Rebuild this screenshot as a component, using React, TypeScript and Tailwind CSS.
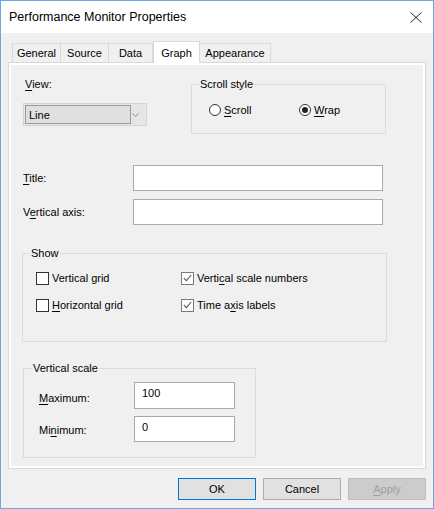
import React from 'react';

const font = "font-['Liberation_Sans',Arial,sans-serif]";

function U({ children }: { children: React.ReactNode }) {
  return <span className="underline decoration-1 underline-offset-[2px]">{children}</span>;
}

function Tab({ label, width, active }: { label: string; width: string; active?: boolean }) {
  if (active) {
    return (
      <div
        className={`${width} h-[22px] -mb-px relative z-10 bg-white border border-b-0 border-[#d9d9d9] flex items-center justify-center`}
      >
        {label}
      </div>
    );
  }
  return (
    <div
      className={`${width} h-[19px] mt-[2px] bg-[#f0f0f0] border border-b-0 border-[#d9d9d9] -ml-px first:ml-0 flex items-center justify-center`}
    >
      {label}
    </div>
  );
}

function Checkbox({ checked, children }: { checked?: boolean; children: React.ReactNode }) {
  return (
    <div className="flex items-center h-[14px]">
      <div
        className={`w-[13px] h-[13px] bg-white border flex items-center justify-center ${
          checked ? 'border-[#7a7a7a]' : 'border-[#333333]'
        }`}
      >
        {checked && (
          <svg width="9" height="8" viewBox="0 0 9 8">
            <path d="M0.8 4.2 L3.4 6.6 L8.2 1" fill="none" stroke="#555" strokeWidth="1.1" />
          </svg>
        )}
      </div>
      <span className="ml-[3px]">{children}</span>
    </div>
  );
}

function Radio({ checked, children }: { checked?: boolean; children: React.ReactNode }) {
  return (
    <div className="flex items-center h-[14px]">
      <div className="w-[12px] h-[12px] rounded-full bg-white border border-[#333333] flex items-center justify-center">
        {checked && <div className="w-[6px] h-[6px] rounded-full bg-[#222]" />}
      </div>
      <span className="ml-[3px]">{children}</span>
    </div>
  );
}

function Button({ children, variant }: { children: React.ReactNode; variant?: 'default' | 'disabled' }) {
  const cls =
    variant === 'default'
      ? 'border-[#0078d7] bg-[#e1e1e1] text-black'
      : variant === 'disabled'
      ? 'border-[#bfbfbf] bg-[#cccccc] text-[#a0a0a0]'
      : 'border-[#adadad] bg-[#e1e1e1] text-black';
  return (
    <div className={`w-[78px] h-[22px] border flex items-center justify-center ${cls}`}>{children}</div>
  );
}

export default function App() {
  return (
    <div className={`${font} w-[434px] h-[509px] bg-[#f0f0f0] border border-[#6fa8dc] text-[11px] leading-[14px] text-black flex flex-col overflow-hidden`}>
      {/* title bar */}
      <div className="h-[32px] bg-white flex items-center justify-between pl-[8px] pr-[11px] shrink-0">
        <span className="text-[12.5px]">Performance Monitor Properties</span>
        <svg width="12" height="11" viewBox="0 0 12 11">
          <path d="M0.5 0.5 L11.5 10.5 M11.5 0.5 L0.5 10.5" stroke="#222" strokeWidth="1" fill="none" />
        </svg>
      </div>

      {/* tab strip */}
      <div className="flex items-end mt-[8px] ml-[11px] h-[21px]">
        <Tab label="General" width="w-[49px]" />
        <Tab label="Source" width="w-[49px]" />
        <Tab label="Data" width="w-[45px]" />
        <Tab label="Graph" width="w-[47px]" active />
        <Tab label="Appearance" width="w-[72px]" />
      </div>

      {/* tab panel */}
      <div className="ml-[7px] w-[418px] h-[407px] border border-[#d9d9d9] bg-white p-[2px]">
        <div className="h-full bg-[#f0f0f0] flex flex-col">
          {/* view + scroll style */}
          <div className="flex pt-[12px]">
            <div className="ml-[12px] w-[124px] flex flex-col">
              <span className="ml-[2px]">
                <U>V</U>iew:
              </span>
              <div className="mt-[12px] w-[124px] h-[23px] border border-[#d4d4d4] bg-[#e6e6e6] flex items-center pl-[1px] pr-[7px]">
                <div className="w-[106px] h-[19px] border border-[#9a9a9a] bg-[#e0e0e0] flex items-center pl-[3px]">
                  Line
                </div>
                <svg className="ml-auto" width="7" height="4" viewBox="0 0 7 4">
                  <path d="M0.5 0.5 L3.5 3.5 L6.5 0.5" stroke="#888" strokeWidth="1" fill="none" />
                </svg>
              </div>
            </div>
            <fieldset className="ml-[44px] w-[195px] h-[57px] border border-[#dcdcdc] rounded-none">
              <legend className="ml-[7px] px-[1px]">Scroll style</legend>
              <div className="flex mt-[12px] pl-[17px]">
                <div className="w-[90px]">
                  <Radio>
                    <U>S</U>croll
                  </Radio>
                </div>
                <Radio checked>
                  <U>W</U>rap
                </Radio>
              </div>
            </fieldset>
          </div>

          {/* title / vertical axis */}
          <div className="flex items-center mt-[31px] ml-[12px]">
            <span className="w-[110px]">
              <U>T</U>itle:
            </span>
            <div className="w-[250px] h-[26px] bg-white border border-[#a9a9a9]" />
          </div>
          <div className="flex items-center mt-[8px] ml-[12px]">
            <span className="w-[110px]">
              V<U>e</U>rtical axis:
            </span>
            <div className="w-[250px] h-[26px] bg-white border border-[#a9a9a9]" />
          </div>

          {/* show */}
          <fieldset className="mt-[21px] ml-[11px] w-[365px] h-[96px] border border-[#dcdcdc]">
            <legend className="ml-[7px] px-[1px]">Show</legend>
            <div className="grid grid-cols-[145px_1fr] gap-y-[13px] mt-[11px] pl-[13px]">
              <Checkbox>Vertical grid</Checkbox>
              <Checkbox checked>
                Verti<U>c</U>al scale numbers
              </Checkbox>
              <Checkbox>
                <U>H</U>orizontal grid
              </Checkbox>
              <Checkbox checked>
                Time a<U>x</U>is labels
              </Checkbox>
            </div>
          </fieldset>

          {/* vertical scale */}
          <fieldset className="mt-[19px] ml-[12px] w-[233px] h-[97px] border border-[#dcdcdc]">
            <legend className="ml-[8px] px-[1px]">Vertical scale</legend>
            <div className="flex items-center mt-[7px] pl-[15px]">
              <span className="w-[95px] mt-[4px]">
                <U>M</U>aximum:
              </span>
              <div className="w-[101px] h-[27px] bg-white border border-[#a9a9a9] pl-[7px] pt-[3px]">100</div>
            </div>
            <div className="flex items-center mt-[7px] pl-[15px]">
              <span className="w-[95px] mt-[2px]">
                Mi<U>n</U>imum:
              </span>
              <div className="w-[101px] h-[26px] bg-white border border-[#a9a9a9] pl-[7px] pt-[3px]">0</div>
            </div>
          </fieldset>
        </div>
      </div>

      {/* buttons */}
      <div className="flex justify-end gap-[7px] mt-[9px] mr-[7px]">
        <Button variant="default">OK</Button>
        <Button>Cancel</Button>
        <Button variant="disabled">
          <U>A</U>pply
        </Button>
      </div>
    </div>
  );
}
